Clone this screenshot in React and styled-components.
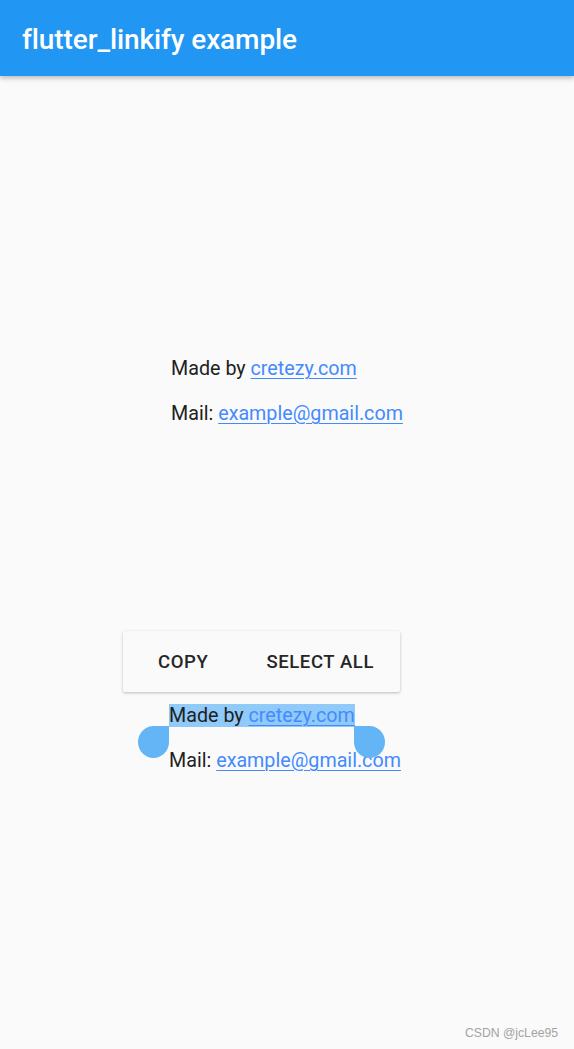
import React from 'react'
import styled, { createGlobalStyle } from 'styled-components'

const Global = createGlobalStyle`
  html, body {
    margin: 0;
    padding: 0;
    background: #fafafa;
  }
  body {
    font-family: Roboto, 'Noto Sans', sans-serif;
  }
`

const Page = styled.div`
  position: relative;
  width: 574px;
  height: 1049px;
  overflow: hidden;
  background: #fafafa;
`

const AppBar = styled.header`
  position: relative;
  z-index: 2;
  height: 76px;
  display: flex;
  align-items: center;
  padding: 0 22px;
  background: #2196f3;
  box-shadow: 0 2px 4px rgba(0, 0, 0, 0.16), 0 4px 5px rgba(0, 0, 0, 0.08);
`

const Title = styled.h1`
  margin: 3px 0 0 0;
  font-size: 28px;
  font-weight: 500;
  color: #fff;
  letter-spacing: -0.1px;
`

const Body = styled.main`
  display: flex;
  flex-direction: column;
  align-items: center;
  padding-top: 281px;
`

const Block = styled.div`
  position: relative;
  display: flex;
  flex-direction: column;
  gap: 21px;
  margin-top: ${p => p.$top || 0}px;
  margin-right: ${p => p.$shift || 0}px;
`

const Line = styled.p`
  margin: 0;
  font-size: 19.7px;
  line-height: 24px;
  color: #212121;
  white-space: nowrap;
`

const Link = styled.span`
  color: #448aff;
  text-decoration: underline;
  text-decoration-thickness: 1px;
  text-underline-offset: 3px;
`

const Selected = styled.span`
  background: #90caf9;
`

const Handle = styled.div`
  position: absolute;
  top: 22px;
  width: 31px;
  height: 32px;
  background: #64b5f6;
  border-radius: ${p => (p.$side === 'left' ? '50% 0 50% 50%' : '0 50% 50% 50%')};
  ${p => (p.$side === 'left' ? 'left: -31px;' : 'left: 185px;')}
`

const Menu = styled.div`
  position: absolute;
  top: -73px;
  left: -46px;
  display: flex;
  align-items: center;
  height: 61px;
  width: 277px;
  background: #fafafa;
  box-shadow: 0 1px 3px rgba(0, 0, 0, 0.25);
  border-radius: 2px;
`

const MenuButton = styled.button`
  border: 0;
  background: transparent;
  font-family: Roboto, sans-serif;
  font-size: 18.5px;
  font-weight: 500;
  letter-spacing: 0.6px;
  color: #262626;
  padding: 0;
  margin-left: ${p => p.$left}px;
`

const Watermark = styled.div`
  position: absolute;
  right: 16px;
  bottom: 9px;
  font-family: 'Liberation Sans', Arial, sans-serif;
  font-size: 12.2px;
  color: #a3a3a3;
`

export default function App() {
  return (
    <Page>
      <Global />
      <AppBar>
        <Title>flutter_linkify example</Title>
      </AppBar>
      <Body>
        <Block>
          <Line>Made by <Link>cretezy.com</Link></Line>
          <Line>Mail: <Link>example@gmail.com</Link></Line>
        </Block>
        <Block $top={278} $shift={4}>
          <Menu>
            <MenuButton $left={35}>COPY</MenuButton>
            <MenuButton $left={58}>SELECT ALL</MenuButton>
          </Menu>
          <Line>
            <Selected>Made by <Link>cretezy.com</Link></Selected>
          </Line>
          <Line>Mail: <Link>example@gmail.com</Link></Line>
          <Handle $side="left" />
          <Handle $side="right" />
        </Block>
      </Body>
      <Watermark>CSDN @jcLee95</Watermark>
    </Page>
  )
}
